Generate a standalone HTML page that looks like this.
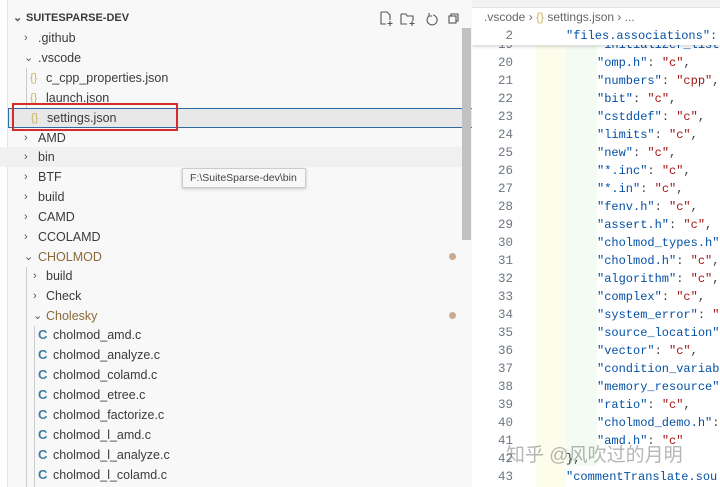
<!DOCTYPE html>
<html><head><meta charset="utf-8"><style>
*{margin:0;padding:0;box-sizing:border-box}
body{width:720px;height:487px;overflow:hidden;background:#f8f8f8;font-family:"Liberation Sans","Noto Sans CJK SC",sans-serif;position:relative}
.side{position:absolute;left:0;top:0;width:472px;height:487px;background:#f8f8f8}
.row{position:absolute;left:0;width:462px;height:20px;font-size:12.5px;color:#3b3b3b;line-height:20px;white-space:nowrap}
.chev{position:absolute;top:0;font-size:11px;color:#555}
.ed{position:absolute;left:472px;top:0;width:248px;height:487px;background:#fff;overflow:hidden}
.ln{position:absolute;left:0;width:41px;text-align:right;font-family:"Liberation Mono","DejaVu Sans Mono",monospace;font-size:12.5px;color:#6e7681}
.cd{position:absolute;font-family:"Liberation Mono","DejaVu Sans Mono",monospace;font-size:12px;color:#0451a5;white-space:pre}
.s{color:#a31515}
.c{color:#3b3b3b}
.dot{position:absolute;left:449px;width:7px;height:7px;border-radius:50%;background:#c9a98f}
.cic{position:absolute;font-weight:bold;color:#3c7ea0;font-size:13px}
</style></head><body>
<div class="side">
 <div style="position:absolute;left:0;top:0;width:8px;height:487px;background:#fff;border-right:1px solid #e5e5e5"></div>
 <div class="row" style="top:8px;font-weight:bold;font-size:11px"><span class="chev" style="left:13px">⌄</span><span style="position:absolute;left:26px">SUITESPARSE-DEV</span>
  <svg style="position:absolute;left:378px;top:3px" width="84" height="16" fill="none" stroke="#555" stroke-width="1.1"><path d="M3 1h6l3 3v5M3 1v12h5M12 10v5M9.5 12.5h5"/><path d="M23 3h5l1 2h6v5M23 3v10h6M34 10v5M31.5 12.5h5"/><path d="M55 4a5 5 0 1 1-4 1M51 2v3h3"/><rect x="71" y="5" width="7" height="7"/><path d="M73 5V3h7v7h-2"/></svg>
 </div>
 <div class="row" style="top:28px"><span class="chev" style="left:24px">›</span><span style="position:absolute;left:38px">.github</span></div>
 <div class="row" style="top:48px"><span class="chev" style="left:24px">⌄</span><span style="position:absolute;left:38px">.vscode</span></div>
 <div style="position:absolute;left:26px;top:68px;width:1px;height:60px;background:#ccc"></div>
 <div class="row" style="top:68px"><span style="position:absolute;left:30px;color:#c9b35e;font-size:11px">{}</span><span style="position:absolute;left:46px">c_cpp_properties.json</span></div>
 <div class="row" style="top:88px"><span style="position:absolute;left:30px;color:#c9b35e;font-size:11px">{}</span><span style="position:absolute;left:46px">launch.json</span></div>
 <div class="row" style="top:108px;width:470px;left:8px;background:#e8e8e8;border:1px solid #2e6ca4"><span style="position:absolute;left:22px;color:#c9b35e;font-size:11px;line-height:18px">{}</span><span style="position:absolute;left:38px;line-height:18px">settings.json</span></div>
 <div style="position:absolute;left:12px;top:103px;width:166px;height:28px;border:2px solid #d42b2b"></div>
 <div class="row" style="top:128px"><span class="chev" style="left:24px">›</span><span style="position:absolute;left:38px">AMD</span></div>
 <div class="row" style="top:147px;background:#f0f0f0"><span class="chev" style="left:24px">›</span><span style="position:absolute;left:38px">bin</span></div>
 <div class="row" style="top:167px"><span class="chev" style="left:24px">›</span><span style="position:absolute;left:38px">BTF</span></div>
 <div class="row" style="top:187px"><span class="chev" style="left:24px">›</span><span style="position:absolute;left:38px">build</span></div>
 <div class="row" style="top:207px"><span class="chev" style="left:24px">›</span><span style="position:absolute;left:38px">CAMD</span></div>
 <div class="row" style="top:227px"><span class="chev" style="left:24px">›</span><span style="position:absolute;left:38px">CCOLAMD</span></div>
 <div class="row" style="top:247px;color:#8a6a3a"><span class="chev" style="left:24px">⌄</span><span style="position:absolute;left:38px">CHOLMOD</span></div>
 <div class="dot" style="top:253px"></div>
 <div style="position:absolute;left:26px;top:267px;width:1px;height:220px;background:#ccc"></div>
 <div class="row" style="top:266px"><span class="chev" style="left:33px">›</span><span style="position:absolute;left:46px">build</span></div>
 <div class="row" style="top:286px"><span class="chev" style="left:33px">›</span><span style="position:absolute;left:46px">Check</span></div>
 <div class="row" style="top:306px;color:#8a6a3a"><span class="chev" style="left:33px">⌄</span><span style="position:absolute;left:46px">Cholesky</span></div>
 <div class="dot" style="top:312px"></div>
 <div style="position:absolute;left:34px;top:326px;width:1px;height:161px;background:#ccc"></div>
 <div class="row" style="top:325px"><span class="cic" style="left:38px">C</span><span style="position:absolute;left:53px">cholmod_amd.c</span></div>
 <div class="row" style="top:345px"><span class="cic" style="left:38px">C</span><span style="position:absolute;left:53px">cholmod_analyze.c</span></div>
 <div class="row" style="top:365px"><span class="cic" style="left:38px">C</span><span style="position:absolute;left:53px">cholmod_colamd.c</span></div>
 <div class="row" style="top:385px"><span class="cic" style="left:38px">C</span><span style="position:absolute;left:53px">cholmod_etree.c</span></div>
 <div class="row" style="top:405px"><span class="cic" style="left:38px">C</span><span style="position:absolute;left:53px">cholmod_factorize.c</span></div>
 <div class="row" style="top:425px"><span class="cic" style="left:38px">C</span><span style="position:absolute;left:53px">cholmod_l_amd.c</span></div>
 <div class="row" style="top:445px"><span class="cic" style="left:38px">C</span><span style="position:absolute;left:53px">cholmod_l_analyze.c</span></div>
 <div class="row" style="top:465px"><span class="cic" style="left:38px">C</span><span style="position:absolute;left:53px">cholmod_l_colamd.c</span></div>
 <div style="position:absolute;left:182px;top:168px;width:124px;height:20px;background:#f8f8f8;border:1px solid #ccc;box-shadow:0 1px 3px rgba(0,0,0,.2);font-size:10.5px;color:#444;line-height:18px;padding-left:7px">F:\SuiteSparse-dev\bin</div>
 <div style="position:absolute;left:462px;top:28px;width:9px;height:212px;background:#c1c1c1"></div>
</div>
<div class="ed">
 <div style="position:absolute;left:0;top:0;width:248px;height:8px;background:#f3f3f3;border-bottom:1px solid #e5e5e5"></div>
 <div style="position:absolute;left:64px;top:46px;width:30px;height:441px;background:#fdfdec"></div>
 <div style="position:absolute;left:94px;top:46px;width:31px;height:420px;background:#f3fbf3"></div>
 <div class="ln" style="top:38px">19</div><div class="cd" style="left:125px;top:38px">"initializer_list"</div>
 <div style="position:absolute;left:12px;top:10px;font-size:12px;color:#666">.vscode › <span style="color:#c9b35e">{}</span> settings.json › ...</div>
 <div style="position:absolute;left:0;top:28px;width:248px;height:17px;background:#fff;box-shadow:0 2px 3px rgba(0,0,0,.15)"></div>
 <div class="ln" style="top:29px">2</div><div class="cd" style="left:94px;top:29px">"files.associations":</div>
 <div class="ln" style="top:56px">20</div><div class="cd" style="left:125px;top:56px">"omp.h"<span class="c">: </span><span class="s">"c"</span><span class="c">,</span></div>
 <div class="ln" style="top:74px">21</div><div class="cd" style="left:125px;top:74px">"numbers"<span class="c">: </span><span class="s">"cpp"</span><span class="c">,</span></div>
 <div class="ln" style="top:92px">22</div><div class="cd" style="left:125px;top:92px">"bit"<span class="c">: </span><span class="s">"c"</span><span class="c">,</span></div>
 <div class="ln" style="top:110px">23</div><div class="cd" style="left:125px;top:110px">"cstddef"<span class="c">: </span><span class="s">"c"</span><span class="c">,</span></div>
 <div class="ln" style="top:128px">24</div><div class="cd" style="left:125px;top:128px">"limits"<span class="c">: </span><span class="s">"c"</span><span class="c">,</span></div>
 <div class="ln" style="top:146px">25</div><div class="cd" style="left:125px;top:146px">"new"<span class="c">: </span><span class="s">"c"</span><span class="c">,</span></div>
 <div class="ln" style="top:164px">26</div><div class="cd" style="left:125px;top:164px">"*.inc"<span class="c">: </span><span class="s">"c"</span><span class="c">,</span></div>
 <div class="ln" style="top:182px">27</div><div class="cd" style="left:125px;top:182px">"*.in"<span class="c">: </span><span class="s">"c"</span><span class="c">,</span></div>
 <div class="ln" style="top:200px">28</div><div class="cd" style="left:125px;top:200px">"fenv.h"<span class="c">: </span><span class="s">"c"</span><span class="c">,</span></div>
 <div class="ln" style="top:218px">29</div><div class="cd" style="left:125px;top:218px">"assert.h"<span class="c">: </span><span class="s">"c"</span><span class="c">,</span></div>
 <div class="ln" style="top:236px">30</div><div class="cd" style="left:125px;top:236px">"cholmod_types.h"</div>
 <div class="ln" style="top:254px">31</div><div class="cd" style="left:125px;top:254px">"cholmod.h"<span class="c">: </span><span class="s">"c"</span><span class="c">,</span></div>
 <div class="ln" style="top:272px">32</div><div class="cd" style="left:125px;top:272px">"algorithm"<span class="c">: </span><span class="s">"c"</span><span class="c">,</span></div>
 <div class="ln" style="top:290px">33</div><div class="cd" style="left:125px;top:290px">"complex"<span class="c">: </span><span class="s">"c"</span><span class="c">,</span></div>
 <div class="ln" style="top:308px">34</div><div class="cd" style="left:125px;top:308px">"system_error"<span class="c">: </span><span class="s">"</span></div>
 <div class="ln" style="top:326px">35</div><div class="cd" style="left:125px;top:326px">"source_location"</div>
 <div class="ln" style="top:344px">36</div><div class="cd" style="left:125px;top:344px">"vector"<span class="c">: </span><span class="s">"c"</span><span class="c">,</span></div>
 <div class="ln" style="top:362px">37</div><div class="cd" style="left:125px;top:362px">"condition_variab</div>
 <div class="ln" style="top:380px">38</div><div class="cd" style="left:125px;top:380px">"memory_resource"</div>
 <div class="ln" style="top:398px">39</div><div class="cd" style="left:125px;top:398px">"ratio"<span class="c">: </span><span class="s">"c"</span><span class="c">,</span></div>
 <div class="ln" style="top:416px">40</div><div class="cd" style="left:125px;top:416px">"cholmod_demo.h"<span class="c">:</span></div>
 <div class="ln" style="top:434px">41</div><div class="cd" style="left:125px;top:434px">"amd.h"<span class="c">: </span><span class="s">"c"</span></div>
 <div class="ln" style="top:452px">42</div><div class="cd c" style="left:94px;top:452px">},</div>
 <div class="ln" style="top:470px">43</div><div class="cd" style="left:94px;top:470px">"commentTranslate.sou</div>
 <div style="position:absolute;left:34px;top:440px;font-size:19px;color:rgba(120,120,120,.55);white-space:nowrap">知乎 @风吹过的月明</div>
</div>
</body></html>
